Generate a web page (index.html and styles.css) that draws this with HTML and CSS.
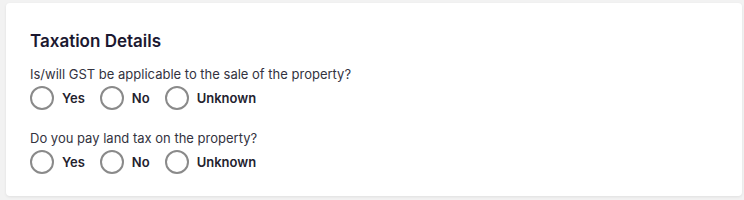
FILE: index.html
```html
<!DOCTYPE html>
<html lang="en">
<head>
    <meta charset="UTF-8">
    <meta name="viewport" content="width=device-width, initial-scale=1.0">
    <title>Taxation Details</title>
    <link rel="stylesheet" href="styles.css">
</head>
<body>
    <div class="card">
        <h2 class="card-title">Taxation Details</h2>

        <div class="question">
            <p class="question-label">Is/will GST be applicable to the sale of the property?</p>
            <div class="radio-group">
                <label class="radio"><input type="radio" name="gst"><span class="radio-circle"></span>Yes</label>
                <label class="radio"><input type="radio" name="gst"><span class="radio-circle"></span>No</label>
                <label class="radio"><input type="radio" name="gst"><span class="radio-circle"></span>Unknown</label>
            </div>
        </div>

        <div class="question">
            <p class="question-label">Do you pay land tax on the property?</p>
            <div class="radio-group">
                <label class="radio"><input type="radio" name="landtax"><span class="radio-circle"></span>Yes</label>
                <label class="radio"><input type="radio" name="landtax"><span class="radio-circle"></span>No</label>
                <label class="radio"><input type="radio" name="landtax"><span class="radio-circle"></span>Unknown</label>
            </div>
        </div>
    </div>
</body>
</html>
```

FILE: styles.css
```css
* { margin: 0; padding: 0; box-sizing: border-box; }
body { font-family: Inter, 'Noto Sans', sans-serif; background: #f2f2f2; color: #2b2b3a; padding: 3px 2px 4px 6px; }
.card { background: white; border-radius: 4px; box-shadow: 0 1px 3px rgba(0,0,0,0.08); padding: 26px 24px 22px; height: 193px; }
.card-title { font-size: 17px; font-weight: 600; color: #1b1830; line-height: 24px; margin-bottom: 12px; }
.question { margin-bottom: 19px; }
.question-label { font-size: 13px; line-height: 18px; color: #333340; margin-bottom: 3px; }
.radio-group { display: flex; align-items: center; gap: 15px; }
.radio { display: flex; align-items: center; gap: 8px; font-size: 13px; font-weight: 600; color: #23222e; cursor: pointer; }
.radio input { display: none; }
.radio-circle { width: 24px; height: 24px; border: 2px solid #8a8a8a; border-radius: 50%; }
.radio input:checked + .radio-circle { border-color: #5a4fcf; box-shadow: inset 0 0 0 4px white; background: #5a4fcf; }
```
